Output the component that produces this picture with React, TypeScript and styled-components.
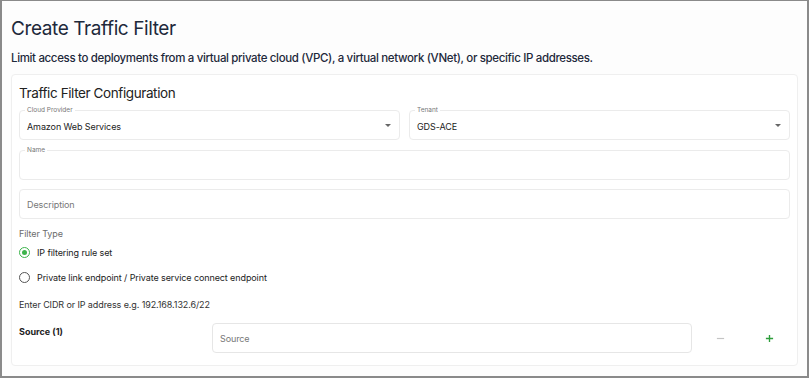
import styled, { createGlobalStyle } from "styled-components";

const GlobalStyle = createGlobalStyle`
  html, body {
    margin: 0;
    padding: 0;
    background: #ffffff;
  }
  body {
    font-family: Inter, "Noto Sans", "Liberation Sans", sans-serif;
    color: #1f2937;
  }
`;

const Frame = styled.div`
  box-sizing: border-box;
  width: 809px;
  height: 378px;
  border: 2px solid #8a8a8a;
  border-top-width: 1px;
  background: #fdfdfd;
  padding: 0 9px;
  overflow: hidden;
`;

const PageTitle = styled.h1`
  margin: 15px 0 0 0;
  font-size: 19px;
  font-weight: 400;
  line-height: 26px;
  color: #1e293b;
  letter-spacing: -0.4px;
`;

const Lead = styled.p`
  margin: 8px 0 0 0;
  font-size: 11.5px;
  font-weight: 500;
  line-height: 16px;
  letter-spacing: -0.35px;
  color: #1e293b;
`;

const Card = styled.section`
  margin-top: 8px;
  border: 1px solid #efefef;
  border-radius: 4px;
  background: #ffffff;
  padding: 9px 7px 12px 7px;
`;

const CardTitle = styled.h2`
  margin: 0;
  font-size: 13.5px;
  font-weight: 400;
  line-height: 18px;
  letter-spacing: -0.4px;
  color: #222;
`;

const TwoCols = styled.div`
  display: grid;
  grid-template-columns: 1fr 1fr;
  gap: 9px;
  margin-top: 8px;
`;

const Field = styled.div<{ $gap?: number }>`
  position: relative;
  box-sizing: border-box;
  height: 30px;
  border: 1px solid #ebebeb;
  border-radius: 4px;
  display: flex;
  align-items: center;
  padding: 0 7px;
  margin-top: ${({ $gap }) => $gap ?? 9}px;
  font-size: 9px;
  letter-spacing: -0.1px;
  color: #222;
`;

const Legend = styled.span`
  position: absolute;
  top: -5px;
  left: 5px;
  padding: 0 2px;
  background: #ffffff;
  font-size: 6.5px;
  line-height: 9px;
  letter-spacing: 0;
  color: #777;
`;

const Value = styled.span`
  flex: 1;
  margin-top: 2px;
`;

const Placeholder = styled.span`
  flex: 1;
  color: #777;
  font-size: 9px;
  letter-spacing: -0.1px;
`;

const Caret = styled.span`
  width: 0;
  height: 0;
  margin-right: 1px;
  border-left: 3.5px solid transparent;
  border-right: 3.5px solid transparent;
  border-top: 3.5px solid #666;
`;

const SectionLabel = styled.div`
  margin-top: 8px;
  font-size: 9px;
  letter-spacing: -0.1px;
  color: #6b6b6b;
  line-height: 14px;
`;

const RadioRow = styled.label<{ $gap: number }>`
  display: flex;
  align-items: center;
  gap: 7px;
  margin-top: ${({ $gap }) => $gap}px;
  height: 18px;
  font-size: 9px;
  letter-spacing: -0.1px;
  color: #222;
`;

const RadioDot = styled.span<{ $on?: boolean }>`
  box-sizing: border-box;
  width: 11px;
  height: 11px;
  border-radius: 50%;
  border: 1.3px solid ${({ $on }) => ($on ? "#3cb44b" : "#555")};
  display: flex;
  align-items: center;
  justify-content: center;
  &::after {
    content: "";
    display: ${({ $on }) => ($on ? "block" : "none")};
    width: 5px;
    height: 5px;
    border-radius: 50%;
    background: #3cb44b;
  }
`;

const Hint = styled.div`
  margin-top: 12px;
  font-size: 9px;
  letter-spacing: -0.1px;
  color: #333;
  line-height: 14px;
`;

const SourceRow = styled.div`
  display: grid;
  grid-template-columns: 193px 1fr 56px 42px;
  align-items: start;
  margin-top: 11px;
`;

const SourceLabel = styled.div`
  font-size: 9px;
  font-weight: 700;
  line-height: 12px;
  color: #222;
  margin-top: 3px;
`;

const SourceInput = styled.div`
  box-sizing: border-box;
  height: 30px;
  border: 1px solid #e6e6e6;
  border-radius: 4px;
  display: flex;
  align-items: center;
  padding: 0 7px;
`;

const IconButton = styled.button<{ $active?: boolean }>`
  height: 30px;
  border: none;
  background: transparent;
  padding: 0;
  display: flex;
  align-items: center;
  justify-content: center;
  color: ${({ $active }) => ($active ? "#2e9e3c" : "#c4c4c4")};
  svg {
    display: block;
  }
`;

export default function App() {
  return (
    <>
      <GlobalStyle />
      <Frame>
        <PageTitle>Create Traffic Filter</PageTitle>
        <Lead>
          Limit access to deployments from a virtual private cloud (VPC), a virtual network (VNet), or
          specific IP addresses.
        </Lead>
        <Card>
          <CardTitle>Traffic Filter Configuration</CardTitle>
          <TwoCols>
            <Field $gap={0}>
              <Legend>Cloud Provider</Legend>
              <Value>Amazon Web Services</Value>
              <Caret />
            </Field>
            <Field $gap={0}>
              <Legend>Tenant</Legend>
              <Value>GDS-ACE</Value>
              <Caret />
            </Field>
          </TwoCols>
          <Field $gap={10}>
            <Legend>Name</Legend>
          </Field>
          <Field>
            <Placeholder>Description</Placeholder>
          </Field>
          <SectionLabel>Filter Type</SectionLabel>
          <RadioRow $gap={2}>
            <RadioDot $on />
            IP filtering rule set
          </RadioRow>
          <RadioRow $gap={7}>
            <RadioDot />
            Private link endpoint / Private service connect endpoint
          </RadioRow>
          <Hint>Enter CIDR or IP address e.g. 192.168.132.6/22</Hint>
          <SourceRow>
            <SourceLabel>Source (1)</SourceLabel>
            <SourceInput>
              <Placeholder>Source</Placeholder>
            </SourceInput>
            <IconButton aria-label="remove">
              <svg width="9" height="9" viewBox="0 0 10 10">
                <path d="M1 5h8" stroke="currentColor" strokeWidth="1.3" />
              </svg>
            </IconButton>
            <IconButton $active aria-label="add">
              <svg width="9" height="9" viewBox="0 0 10 10">
                <path d="M1 5h8M5 1v8" stroke="currentColor" strokeWidth="1.5" />
              </svg>
            </IconButton>
          </SourceRow>
        </Card>
      </Frame>
    </>
  );
}
